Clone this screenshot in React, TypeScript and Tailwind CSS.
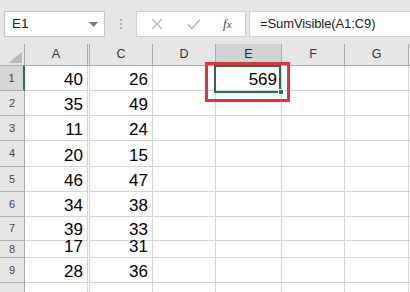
import React from "react";

const rows: { h: string; a: string; c: string }[] = [
  { h: "h-[25px]", a: "40", c: "26" },
  { h: "h-[25px]", a: "35", c: "49" },
  { h: "h-[25px]", a: "11", c: "24" },
  { h: "h-[26px]", a: "20", c: "15" },
  { h: "h-[25px]", a: "46", c: "47" },
  { h: "h-[25px]", a: "34", c: "38" },
  { h: "h-[24px]", a: "39", c: "33" },
  { h: "h-[17px]", a: "17", c: "31" },
  { h: "h-[25px]", a: "28", c: "36" },
  { h: "h-[25px]", a: "", c: "" },
];

const cellBase = "shrink-0 border-r border-b border-[#d4d4d4] flex items-end justify-end pr-[4px] pb-[1px] leading-[18px] text-[17px] text-black";

function Header({ w, label, selected }: { w: string; label: string; selected?: boolean }) {
  return (
    <div
      className={`${w} shrink-0 h-full border-r border-[#ababab] flex items-center justify-center text-[12.5px] ${selected ? "bg-[#d2d2d2] text-[#262626]" : "text-[#333]"}`}
    >
      {label}
    </div>
  );
}

export default function App() {
  return (
    <div className="w-[410px] h-[292px] overflow-hidden bg-white relative" style={{ fontFamily: '"Liberation Sans", Arial, sans-serif' }}>
      {/* toolbar */}
      <div className="h-[44px] bg-[#e6e6e6] flex items-start pt-[11px]">
        <div className="ml-[4px] w-[101px] h-[26px] bg-white border border-[#c6c6c6] flex items-center justify-between pl-[7px] pr-[6px]">
          <span className="text-[13.5px] text-[#222]">E1</span>
          <svg width="9" height="5" viewBox="0 0 9 5"><path d="M0 0 H9 L4.5 5 Z" fill="#7a7a7a" /></svg>
        </div>
        <div className="w-[31px] h-[26px] flex flex-col items-center justify-center gap-[2px]">
          <span className="w-[2px] h-[2px] bg-[#b0b0b0]" />
          <span className="w-[2px] h-[2px] bg-[#b0b0b0]" />
          <span className="w-[2px] h-[2px] bg-[#b0b0b0]" />
        </div>
        <div className="w-[110px] h-[26px] bg-white border border-[#d0d0d0] flex items-center pl-[14px]">
          <svg width="12" height="12" viewBox="0 0 12 12" className="shrink-0">
            <path d="M1 1 L11 11 M11 1 L1 11" stroke="#b8b8b8" strokeWidth="1.4" />
          </svg>
          <svg width="14" height="12" viewBox="0 0 14 12" className="shrink-0 ml-[24px]">
            <path d="M1 6.5 L5 10.5 L13 1.5" stroke="#b8b8b8" strokeWidth="1.6" fill="none" />
          </svg>
          <span className="ml-[22px] text-[13px] italic text-[#444]" style={{ fontFamily: '"Liberation Serif", "Times New Roman", serif' }}>
            f<span className="text-[11px]">x</span>
          </span>
        </div>
        <div className="ml-[3px] flex-1 h-[26px] bg-white border border-[#d0d0d0] border-r-0 flex items-center pl-[10px]">
          <span className="text-[13px] text-[#222] tracking-[-0.1px]">=SumVisible(A1:C9)</span>
        </div>
      </div>

      {/* column headers */}
      <div className="h-[22px] bg-[#e6e6e6] flex border-b border-[#ababab]">
        <div className="w-[25px] shrink-0 h-full border-r border-[#ababab] flex items-end justify-end pr-[2px] pb-[2px]">
          <svg width="14" height="11" viewBox="0 0 14 11"><path d="M14 0 L14 11 L0 11 Z" fill="#b9b9b9" /></svg>
        </div>
        <Header w="w-[63px]" label="A" />
        <div className="w-[2px] shrink-0 h-full border-r border-[#ababab]" />
        <Header w="w-[63px]" label="C" />
        <Header w="w-[63px]" label="D" />
        <Header w="w-[66px]" label="E" selected />
        <Header w="w-[63px]" label="F" />
        <Header w="w-[64px]" label="G" />
        <div className="flex-1" />
      </div>

      {/* rows */}
      {rows.map((r, i) => (
        <div key={i} className={`${r.h} flex`}>
          <div
            className={`w-[25px] shrink-0 border-b border-[#ababab] flex items-center justify-center text-[11px] text-[#444] ${i === 0 ? "bg-[#d6d6d6] border-r-2 border-r-[#217346]" : "bg-[#e6e6e6] border-r border-r-[#ababab]"}`}
          >
            {i < 9 ? i + 1 : ""}
          </div>
          <div className={`${cellBase} w-[63px]`}>{r.a}</div>
          <div className="w-[2px] shrink-0 border-r border-[#d4d4d4]" />
          <div className={`${cellBase} w-[63px]`}>{r.c}</div>
          <div className={`${cellBase} w-[63px]`} />
          <div className={`${cellBase} w-[66px]`}>{i === 0 ? "569" : ""}</div>
          <div className={`${cellBase} w-[63px]`} />
          <div className={`${cellBase} w-[64px]`} />
          <div className="flex-1 border-b border-[#d4d4d4]" />
        </div>
      ))}

      {/* selection outline */}
      <div className="absolute left-[214px] top-[65px] w-[67px] h-[28px] border-2 border-[#217346] pointer-events-none" />
      <div className="absolute left-[278px] top-[89px] w-[6px] h-[6px] bg-[#217346] border border-white" />
      {/* red highlight box */}
      <div className="absolute left-[205px] top-[62px] w-[85px] h-[40px] border-[3px] border-[#e2343a] pointer-events-none" />
    </div>
  );
}
